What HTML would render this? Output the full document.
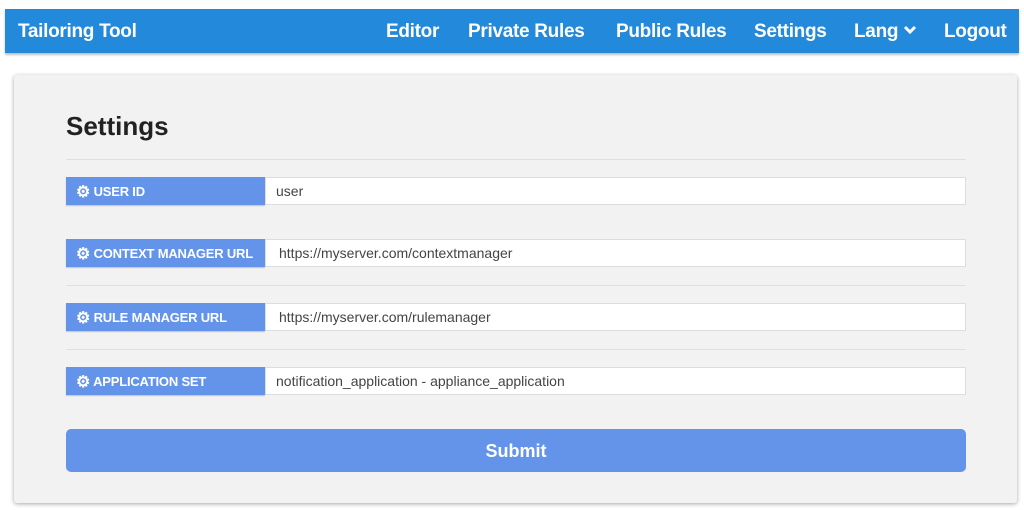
<!DOCTYPE html>
<html><head><style>
body{margin:0;width:1024px;height:510px;background:#fff;font-family:"Liberation Sans",sans-serif;position:relative;overflow:hidden}
.nav{position:absolute;left:5px;top:9px;width:1014px;height:44px;background:#2389db;box-shadow:0 2px 2px rgba(0,0,0,.25);color:#fff;font-size:19px;font-weight:bold}
.nav span{position:absolute;top:12px;letter-spacing:-0.3px}
.card{position:absolute;left:14px;top:75px;width:1003px;height:428px;background:#f2f2f2;border-radius:3px;box-shadow:0 1px 4px rgba(0,0,0,.35)}
h1{position:absolute;left:66px;top:111px;margin:0;font-size:26px;font-weight:bold;color:#222}
.hr{position:absolute;left:66px;width:900px;height:1px;background:#e0e0e0}
.lab{position:absolute;left:66px;width:199px;height:28px;background:#6494ea;color:#fff;font-size:13px;font-weight:bold;line-height:29px;box-sizing:border-box;padding-left:10px;box-shadow:0 1px 1px rgba(0,0,0,.2);letter-spacing:-0.2px}
.lab b{font-size:16px;vertical-align:-1px}
.inp{position:absolute;left:265px;width:701px;height:28px;background:#fff;border:1px solid #ddd;box-sizing:border-box;font-size:14px;color:#444;line-height:27px;padding-left:10px}
.sub{position:absolute;left:66px;top:429px;width:900px;height:43px;background:#6494ea;border-radius:5px;color:#fff;font-weight:bold;font-size:18px;text-align:center;line-height:45px}
</style></head><body>
<div class="nav">
<span style="left:13px">Tailoring Tool</span>
<span style="left:381px">Editor</span>
<span style="left:463px">Private Rules</span>
<span style="left:611px">Public Rules</span>
<span style="left:749px">Settings</span>
<span style="left:849px">Lang <svg width="14" height="12" viewBox="0 0 14 12" style="vertical-align:1px"><path d="M2 3l5 5 5-5" stroke="#fff" stroke-width="3" fill="none"/></svg></span>
<span style="left:939px">Logout</span>
</div>
<div class="card"></div>
<h1>Settings</h1>
<div class="hr" style="top:159px"></div>
<div class="lab" style="top:177px"><b>⚙</b> USER ID</div><div class="inp" style="top:177px">user</div>
<div class="lab" style="top:239px"><b>⚙</b> CONTEXT MANAGER URL</div><div class="inp" style="top:239px;padding-left:13px">https://myserver.com/contextmanager</div>
<div class="hr" style="top:285px"></div>
<div class="lab" style="top:303px"><b>⚙</b> RULE MANAGER URL</div><div class="inp" style="top:303px;padding-left:13px">https://myserver.com/rulemanager</div>
<div class="hr" style="top:349px"></div>
<div class="lab" style="top:367px"><b>⚙</b> APPLICATION SET</div><div class="inp" style="top:367px">notification_application - appliance_application</div>
<div class="sub">Submit</div>
</body></html>
